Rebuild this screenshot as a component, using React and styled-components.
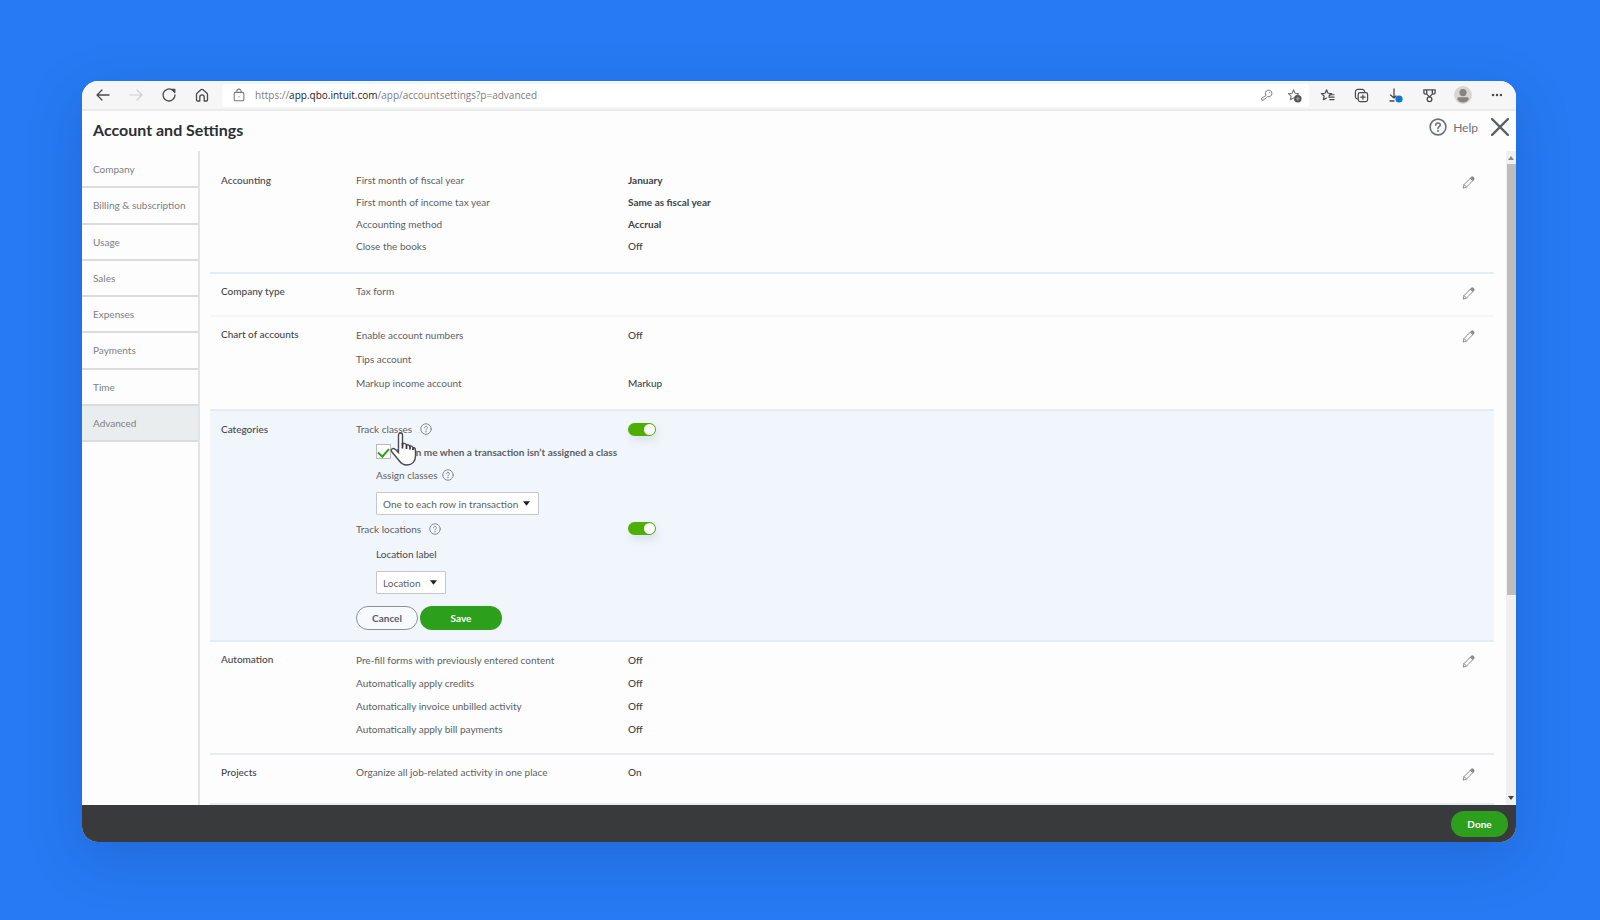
import { useState } from 'react';
import styled, { createGlobalStyle } from 'styled-components';

const tabs = [
  'Company',
  'Billing & subscription',
  'Usage',
  'Sales',
  'Expenses',
  'Payments',
  'Time',
  'Advanced',
];

const accounting = [
  { label: 'First month of fiscal year', value: 'January', bold: true },
  { label: 'First month of income tax year', value: 'Same as fiscal year', bold: true },
  { label: 'Accounting method', value: 'Accrual', bold: true },
  { label: 'Close the books', value: 'Off' },
];

const chart = [
  { label: 'Enable account numbers', value: 'Off' },
  { label: 'Tips account', value: '' },
  { label: 'Markup income account', value: 'Markup' },
];

const automation = [
  { label: 'Pre-fill forms with previously entered content', value: 'Off' },
  { label: 'Automatically apply credits', value: 'Off' },
  { label: 'Automatically invoice unbilled activity', value: 'Off' },
  { label: 'Automatically apply bill payments', value: 'Off' },
];

function Icon({ size = 16, children, ...rest }) {
  return (
    <svg
      width={size}
      height={size}
      viewBox='0 0 16 16'
      fill='none'
      stroke='currentColor'
      strokeLinecap='round'
      strokeLinejoin='round'
      aria-hidden='true'
      {...rest}
    >
      {children}
    </svg>
  );
}

function HelpIcon({ size = 12 }) {
  return (
    <Icon size={size} strokeWidth={size > 12 ? 1.4 : 1.2}>
      <circle cx='8' cy='8' r='7' />
      <path d='M6 6.4C6 5.2 6.9 4.5 8 4.5s2 .7 2 1.8c0 1.4-2 1.5-2 3' />
      <path d='M8 11.4v.2' strokeWidth='1.7' />
    </Icon>
  );
}

function StarPath() {
  return <path d='M7 2l1.6 3.6 3.9.4-2.9 2.6M7 2L5.4 5.6 1.5 6l2.9 2.6-.8 3.9L7 10.6' />;
}

function BrowserBar() {
  return (
    <Toolbar>
      <NavButtons>
        <IconButton aria-label='Back'>
          <Icon strokeWidth='1.3'>
            <path d='M14 8H2M7 3L2 8l5 5' />
          </Icon>
        </IconButton>
        <IconButton aria-label='Forward' disabled>
          <Icon strokeWidth='1.2'>
            <path d='M2 8h12M9 3l5 5-5 5' />
          </Icon>
        </IconButton>
        <IconButton aria-label='Refresh'>
          <Icon strokeWidth='1.3'>
            <path d='M11.2 2.9A6 6 0 1 0 14 8' />
            <path d='M11 2.5h2.8v3z' fill='currentColor' />
          </Icon>
        </IconButton>
        <IconButton aria-label='Home'>
          <Icon strokeWidth='1.3'>
            <path d='M2.5 7.5Q2.5 6.8 3 6.3L7.2 2.6Q8 2 8.8 2.6L13 6.3q.5.5.5 1.2V13q0 1-1 1H10.2V10a2.2 2.2 0 0 0-4.4 0V14H3.5q-1 0-1-1z' />
          </Icon>
        </IconButton>
      </NavButtons>
      <AddressBar>
        <Icon size={14} strokeWidth='1.2'>
          <rect x='2.5' y='5' width='11' height='9.5' rx='1.5' />
          <path d='M5.5 5V3.8a2.5 2.5 0 0 1 5 0V5M8 9.6v.4' />
        </Icon>
        <Url>
          https://<b>app.qbo.intuit.com</b>/app/accountsettings?p=advanced
        </Url>
        <AddressIcons>
          <Icon size={14} strokeWidth='1.1'>
            <path d='M6.6 8.2a3.8 3.8 0 1 1 2 1.6L7.5 11 3.5 14H2v-2z' />
            <path d='M11 4.9v.2' />
          </Icon>
          <Icon size={15} strokeWidth='1.2'>
            <StarPath />
            <circle cx='11.5' cy='11.5' r='4' fill='#555' stroke='none' />
            <path d='M10 11.5h3M11.5 10v3' stroke='#aaa' strokeWidth='1' />
          </Icon>
        </AddressIcons>
      </AddressBar>
      <BarTools>
        <IconButton aria-label='Favorites'>
          <Icon size={15} strokeWidth='1.3'>
            <StarPath />
            <path d='M10.5 7.2h4.5M9.5 9.8H15M10.5 12.3H15' />
          </Icon>
        </IconButton>
        <IconButton aria-label='Collections'>
          <Icon size={15} strokeWidth='1.3'>
            <path d='M3.5 11.5A2.5 2.5 0 0 1 1.5 9V4A2.5 2.5 0 0 1 4 1.5h5A2.5 2.5 0 0 1 11.3 3.5' />
            <rect x='4.5' y='5' width='10' height='9.5' rx='2' />
            <path d='M9.5 7.5v4.5M7.2 9.8h4.6' />
          </Icon>
        </IconButton>
        <IconButton aria-label='Downloads'>
          <Icon strokeWidth='1.3'>
            <path d='M7 2v9M3.5 8L7 11l2-2M3 14h4' />
            <circle cx='12' cy='12' r='3.6' fill='#0b78d0' stroke='none' />
          </Icon>
        </IconButton>
        <IconButton aria-label='Rewards'>
          <Icon size={15} strokeWidth='1.4'>
            <path d='M2 2h12v2.500a2 2 0 0 1-2 2h-1L8 9.500l-3-3H4a2 2 0 0 1-2-2zM5 2v4.500M11 2v4.500' />
            <circle cx='8' cy='12' r='2.5' />
          </Icon>
        </IconButton>
        <IconButton aria-label='Profile'>
          <Icon size={18} stroke='none'>
            <circle cx='8' cy='8' r='8' fill='#d8d6d3' />
            <circle cx='8' cy='5.8' r='3.2' fill='#85837f' />
            <path d='M2.8 11.5q0-1.500 1.500-1.500h7.400q1.500 0 1.500 1.500c-1 2-3 3.200-5.200 3.200s-4.200-1.200-5.200-3.200z' fill='#85837f' />
          </Icon>
        </IconButton>
        <IconButton aria-label='More'>
          <Icon size={14} fill='currentColor' stroke='none'>
            <circle cx='3.5' cy='8' r='1.4' />
            <circle cx='8' cy='8' r='1.4' />
            <circle cx='12.5' cy='8' r='1.4' />
          </Icon>
        </IconButton>
      </BarTools>
    </Toolbar>
  );
}

function EditButton({ name }) {
  return (
    <Edit aria-label={`Edit ${name}`}>
      <Icon size={13} strokeWidth='1.2'>
        <path d='M1.5 14.5l1-4L11 2q1.500-1 2.700.2T14 5l-8.500 8.500zM2.500 10.500l3 3' />
        <path d='M10.5 2.5L11.5 1.5q1.500-1 2.700.2t.3 2.800l-1 1z' fill='currentColor' />
      </Icon>
    </Edit>
  );
}

function Section({ title, rows, rowHeight, height, top, faint }) {
  return (
    <Panel $height={height} $top={top} $faint={faint}>
      <Title>{title}</Title>
      <Rows>
        {rows.map((row) => (
          <Row key={row.label} $height={rowHeight}>
            <dt>{row.label}</dt>
            <Value $bold={row.bold}>{row.value}</Value>
          </Row>
        ))}
      </Rows>
      <EditButton name={title} />
    </Panel>
  );
}

function Dropdown({ id, options, width }) {
  return (
    <SelectBox $width={width}>
      <select id={id}>
        {options.map((option) => (
          <option key={option}>{option}</option>
        ))}
      </select>
      <svg width='7' height='5' viewBox='0 0 8 5' aria-hidden='true'>
        <path d='M0 0h8L4 5z' fill='#222' />
      </svg>
    </SelectBox>
  );
}

function Categories() {
  const [values, setValues] = useState({
    classes: true,
    warn: true,
    locations: true,
  });
  const handleChange = (e) => {
    setValues({ ...values, [e.target.name]: e.target.checked });
  };

  return (
    <Panel $height={231} $top={7} $active>
      <Title>Categories</Title>
      <form onSubmit={(e) => e.preventDefault()}>
        <Row $height={22}>
          <FieldLabel>
            <label htmlFor='classes'>Track classes</label>
            <HelpIcon />
          </FieldLabel>
          <Toggle
            id='classes'
            name='classes'
            checked={values.classes}
            onChange={handleChange}
          />
        </Row>
        <WarnRow>
          <Check
            id='warn'
            name='warn'
            checked={values.warn}
            onChange={handleChange}
          />
          <label htmlFor='warn'>
            Warn me when a transaction isn’t assigned a class
          </label>
          <Pointer width='28' height='34' viewBox='0 0 28 34' aria-hidden='true'>
            <path
              d='M8.5 3.5Q8.5 1 10.5 1t2 2.5V12l1-.5q2-.5 3 1.500 2-1 3.500 1 2-.5 3 1.500 2.500 0 2.500 3v5.500c0 5-3 9-8.500 9-4 0-6-1.500-8-4.500L2 20q-1.500-2 0-3 1.800-1.200 4 1l2.500 2.500z'
              fill='#fff'
              stroke='#4a4a52'
              strokeWidth='1.4'
            />
            <path d='M12.5 11v5.5M16.5 13v4M20 14v3.5M23 15.5V18' fill='none' stroke='#33333c' strokeWidth='1.7' />
          </Pointer>
        </WarnRow>
        <SubLabel>
          <label htmlFor='assign'>Assign classes</label>
          <HelpIcon />
        </SubLabel>
        <Dropdown
          id='assign'
          width={163}
          options={['One to each row in transaction', 'One to entire transaction']}
        />
        <Row $height={27}>
          <FieldLabel>
            <label htmlFor='locations'>Track locations</label>
            <HelpIcon />
          </FieldLabel>
          <Toggle
            id='locations'
            name='locations'
            checked={values.locations}
            onChange={handleChange}
          />
        </Row>
        <SubLabel $dark>
          <label htmlFor='location'>Location label</label>
        </SubLabel>
        <Dropdown
          id='location'
          width={70}
          options={['Location', 'Store', 'Division']}
        />
        <Actions>
          <CancelButton type='button'>Cancel</CancelButton>
          <SaveButton type='submit'>Save</SaveButton>
        </Actions>
      </form>
    </Panel>
  );
}

function App() {
  const [active, setActive] = useState('Advanced');

  return (
    <>
      <GlobalStyle />
      <Page>
        <Browser>
          <BrowserBar />
          <Header>
            <h1>Account and Settings</h1>
            <HeaderTools>
              <HelpLink href='#help'>
                <HelpIcon size={18} />
                Help
              </HelpLink>
              <CloseButton aria-label='Close'>
                <Icon size={18} strokeWidth='2'>
                  <path d='M1 1l14 14M15 1L1 15' />
                </Icon>
              </CloseButton>
            </HeaderTools>
          </Header>
          <Body>
            <Sidebar>
              <TabList>
                {tabs.map((tab) => (
                  <Tab
                    key={tab}
                    href='#settings'
                    $active={tab === active}
                    onClick={() => setActive(tab)}
                  >
                    {tab}
                  </Tab>
                ))}
              </TabList>
            </Sidebar>
            <Content>
              <Section
                title='Accounting'
                rows={accounting}
                rowHeight={22}
                height={123}
                top={18}
              />
              <Section
                title='Company type'
                rows={[{ label: 'Tax form', value: '' }]}
                rowHeight={22}
                height={43}
                faint
              />
              <Section title='Chart of accounts' rows={chart} rowHeight={24} height={94} />
              <Categories />
              <Section title='Automation' rows={automation} rowHeight={23} height={113} />
              <Section
                title='Projects'
                rows={[
                  {
                    label: 'Organize all job-related activity in one place',
                    value: 'On',
                  },
                ]}
                rowHeight={22}
                height={50}
              />
            </Content>
            <Scrollbar aria-hidden='true'>
              <svg width='6' height='4' viewBox='0 0 6 4'>
                <path d='M0 4h6L3 0z' fill='#888' />
              </svg>
              <Thumb />
              <svg width='6' height='4' viewBox='0 0 6 4'>
                <path d='M0 0h6L3 4z' fill='#444' />
              </svg>
            </Scrollbar>
          </Body>
          <Footer>
            <DoneButton type='button'>Done</DoneButton>
          </Footer>
        </Browser>
      </Page>
    </>
  );
}

const GlobalStyle = createGlobalStyle`
  * {
    box-sizing: border-box;
  }
  body {
    margin: 0;
    background: #277af3;
    color: #5c5f63;
    font-family: Lato, 'Liberation Sans', sans-serif;
    font-size: 10px;
  }
  button,
  select {
    font: inherit;
    color: inherit;
  }
  svg {
    display: block;
    flex: none;
  }
`;

const Page = styled.div`
  min-height: 100vh;
  padding: 81px 84px 78px 82px;
`;

const Browser = styled.div`
  display: flex;
  flex-direction: column;
  overflow: hidden;
  border-radius: 16px;
  background: #fdfdfd;
  box-shadow: 0 16px 56px rgba(10, 40, 110, 0.2);
`;

const Toolbar = styled.div`
  display: flex;
  align-items: center;
  height: 30px;
  padding-left: 13px;
  background: #f6f6f6;
  border-bottom: 2px solid #ebebeb;
`;

const NavButtons = styled.div`
  display: flex;
  gap: 17px;
  margin-right: 12px;
`;

const IconButton = styled.button.attrs({ type: 'button' })`
  display: flex;
  align-items: center;
  justify-content: center;
  padding: 0;
  border: 0;
  background: none;
  color: #4a4a4a;
  &:disabled {
    color: #d0d0d0;
  }
`;

const CloseButton = styled(IconButton)`
  color: #5b6066;
`;

const AddressBar = styled.div`
  display: flex;
  flex: 1;
  align-items: center;
  height: 23px;
  padding: 0 7px 0 10px;
  border-radius: 3px;
  background: #fff;
  color: #777;
`;

const Url = styled.span`
  flex: 1;
  margin-left: 9px;
  font-family: 'Open Sans', 'Noto Sans', sans-serif;
  color: #7c7c7c;
  b {
    font-weight: 400;
    color: #222;
  }
`;

const AddressIcons = styled.div`
  display: flex;
  align-items: center;
  gap: 13px;
`;

const BarTools = styled.div`
  display: grid;
  grid-template-columns: repeat(6, 34px);
  padding-left: 1px;
  padding-right: 2px;
`;

const Header = styled.header`
  display: flex;
  justify-content: space-between;
  height: 40px;
  padding: 0 7px 0 11px;
  h1 {
    margin: 0;
    font-size: 16px;
    line-height: 38px;
    color: #2c2f34;
  }
`;

const HeaderTools = styled.div`
  display: flex;
  align-items: center;
  gap: 13px;
  height: 32px;
  color: #5b6066;
`;

const HelpLink = styled.a`
  display: flex;
  align-items: center;
  gap: 6px;
  font-size: 12px;
  color: #6d7176;
  text-decoration: none;
`;

const Body = styled.div`
  display: flex;
`;

const Sidebar = styled.nav`
  width: 118px;
  padding-top: 1px;
  border-right: 2px solid #e4e4e4;
`;

const TabList = styled.div`
  display: grid;
  grid-auto-rows: 1fr;
  height: 290px;
`;

const Tab = styled.a`
  display: flex;
  align-items: center;
  padding-left: 11px;
  border-bottom: 2px solid #dcdcdc;
  background: ${(props) => (props.$active ? '#e9edee' : 'none')};
  color: #7c7f83;
  text-decoration: none;
  white-space: nowrap;
`;

const Content = styled.main`
  flex: 1;
  padding: 0 12px 0 10px;
`;

const Panel = styled.section`
  display: grid;
  grid-template-columns: 135px 1fr 33px;
  align-items: start;
  min-height: ${(props) => props.$height}px;
  padding-top: ${(props) => props.$top || 6}px;
  padding-left: 11px;
  border-bottom: 2px solid ${(props) => (props.$faint ? '#f4f7f8' : '#e6edf1')};
  background: ${(props) => (props.$active ? '#f1f6fd' : 'none')};
`;

const Title = styled.h2`
  margin: 0;
  font-size: 10px;
  font-weight: 500;
  line-height: 22px;
  color: #44474b;
`;

const Rows = styled.dl`
  margin: 0;
`;

const Row = styled.div`
  display: grid;
  grid-template-columns: 272px 1fr;
  align-items: center;
  height: ${(props) => props.$height}px;
`;

const Value = styled.dd`
  margin: 0;
  font-weight: ${(props) => (props.$bold ? 700 : 500)};
  color: #404347;
`;

const Edit = styled(IconButton)`
  width: 14px;
  height: 27px;
  color: #8a8a8a;
`;

const FieldLabel = styled.div`
  display: flex;
  align-items: center;
  gap: 8px;
  svg {
    color: #7c8086;
  }
`;

const Toggle = styled.input.attrs({ type: 'checkbox', role: 'switch' })`
  display: flex;
  justify-content: flex-end;
  appearance: none;
  width: 28px;
  height: 13px;
  margin: 0;
  padding: 1px;
  border-radius: 7px;
  background: #4fae04;
  box-shadow: 2px 5px 8px rgba(60, 90, 120, 0.12);
  &::before {
    content: '';
    width: 11px;
    height: 11px;
    border-radius: 50%;
    background: #fff;
  }
  &:not(:checked) {
    justify-content: flex-start;
    background: #9a9a9a;
  }
`;

const WarnRow = styled.div`
  position: relative;
  display: flex;
  align-items: center;
  gap: 6px;
  height: 23px;
  padding-left: 20px;
  font-weight: 700;
`;

const Check = styled.input.attrs({ type: 'checkbox' })`
  appearance: none;
  width: 15px;
  height: 15px;
  margin: 0;
  border: 1px solid #b5bbc1;
  background: #fff;
  &:checked::before {
    content: '';
    display: block;
    width: 5px;
    height: 9px;
    margin: 1px auto 0;
    border: solid #2ca01c;
    border-width: 0 2px 2px 0;
    transform: rotate(42deg);
  }
`;

const Pointer = styled.svg`
  position: absolute;
  top: -8px;
  left: 34px;
`;

const SubLabel = styled(FieldLabel)`
  gap: 4px;
  height: 24px;
  padding-left: 20px;
  color: ${(props) => (props.$dark ? '#44474b' : 'inherit')};
`;

const SelectBox = styled.div`
  display: grid;
  align-items: center;
  width: ${(props) => props.$width}px;
  height: 23px;
  margin: 5px 0 0 20px;
  select,
  svg {
    grid-area: 1 / 1;
  }
  select {
    appearance: none;
    width: 100%;
    height: 23px;
    padding: 0 16px 0 6px;
    border: 1px solid #c4c8cc;
    border-radius: 1px;
    background: #fff;
  }
  svg {
    justify-self: end;
    margin-right: 9px;
    pointer-events: none;
  }
`;

const Actions = styled.div`
  display: flex;
  gap: 2px;
  margin-top: 12px;
`;

const CancelButton = styled.button`
  width: 62px;
  height: 24px;
  padding: 0;
  border: 1px solid #8d9096;
  border-radius: 12px;
  background: #f6f9fd;
  font-weight: 700;
`;

const SaveButton = styled.button`
  width: 82px;
  height: 24px;
  padding: 0;
  border: 0;
  border-radius: 12px;
  background: #2ca01c;
  color: #fff;
  font-weight: 700;
`;

const DoneButton = styled(SaveButton)`
  width: 57px;
  height: 26px;
  border-radius: 13px;
`;

const Scrollbar = styled.div`
  display: flex;
  flex-direction: column;
  align-items: center;
  width: 10px;
  padding: 5px 0;
  background: #f0f0f0;
`;

const Thumb = styled.div`
  width: 9px;
  height: 67%;
  margin: 4px 0 auto;
  align-self: flex-end;
  background: #bdbdbd;
`;

const Footer = styled.footer`
  display: flex;
  align-items: center;
  justify-content: flex-end;
  height: 37px;
  padding-right: 8px;
  background: #393a3b;
`;

export default App;
